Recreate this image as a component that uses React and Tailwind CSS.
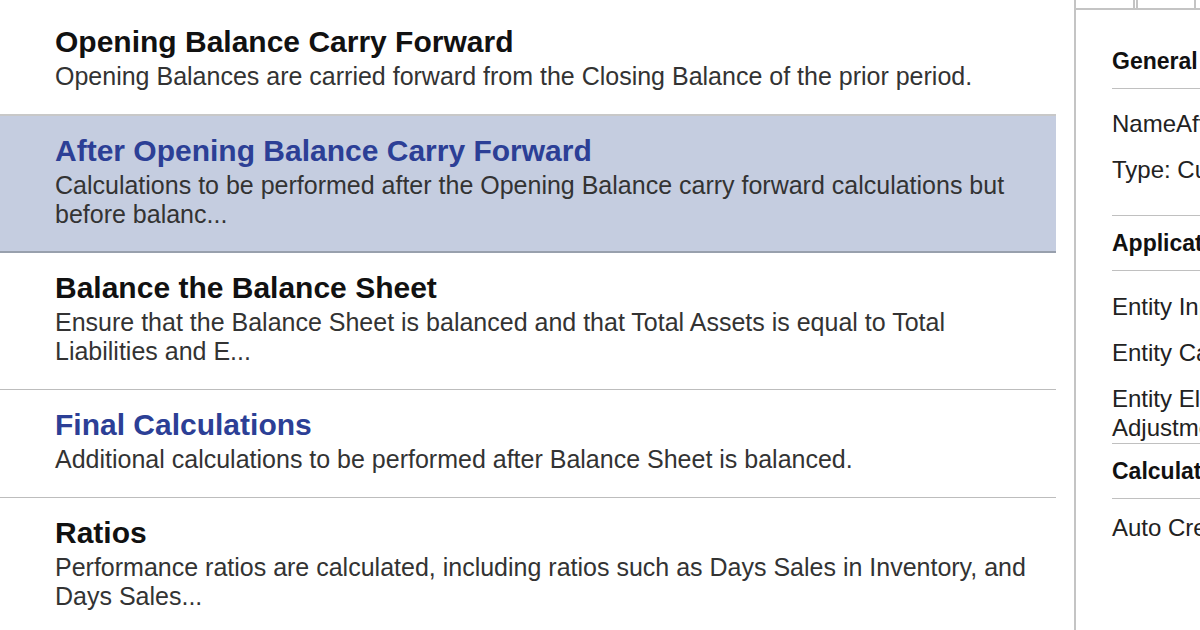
const rows = [
  {
    title: "Opening Balance Carry Forward",
    desc: "Opening Balances are carried forward from the Closing Balance of the prior period.",
  },
  {
    title: "After Opening Balance Carry Forward",
    desc: "Calculations to be performed after the Opening Balance carry forward calculations but before balanc...",
    selected: true,
  },
  {
    title: "Balance the Balance Sheet",
    desc: "Ensure that the Balance Sheet is balanced and that Total Assets is equal to Total Liabilities and E...",
  },
  {
    title: "Final Calculations",
    desc: "Additional calculations to be performed after Balance Sheet is balanced.",
    link: true,
  },
  {
    title: "Ratios",
    desc: "Performance ratios are calculated, including ratios such as Days Sales in Inventory, and Days Sales...",
  },
];

function Row({ row }) {
  const cls = row.selected
    ? "bg-[#c5cde0] border-t-2 border-t-[#c8c8c8] border-b-2 border-b-[#98a0ad] -mt-[1px] pb-[22px]"
    : "border-b border-[#bdbdbd] pb-[23px]";
  return (
    <div className={`pl-[55px] pr-[20px] pt-[18px] ${cls}`}>
      <div
        className={`text-[30px] leading-[34px] font-bold ${
          row.selected || row.link ? "text-[#2c3f96]" : "text-[#111]"
        }`}
      >
        {row.title}
      </div>
      <div className="mt-[3px] text-[25px] leading-[29px] text-[#333]">
        {row.desc}
      </div>
    </div>
  );
}

function Divider({ className }) {
  return <div className={`h-px bg-[#c0c0c0] ${className}`}></div>;
}

export default function App() {
  return (
    <div className="flex h-[630px] w-[1200px] overflow-hidden bg-white font-['Liberation_Sans',Arial,sans-serif]">
      <div className="w-[1056px] shrink-0 pt-[7px]">
        {rows.map((row, i) => (
          <Row key={i} row={row} />
        ))}
      </div>
      <div className="ml-[18px] min-w-0 flex-1 border-l-2 border-[#c4c4c4]">
        <div className="flex h-[10px] border-b-2 border-[#c4c4c4]">
          <div className="w-[59px] border-r-2 border-[#c4c4c4]"></div>
          <div className="ml-[1px] w-[60px] border-x-2 border-[#c4c4c4]"></div>
        </div>
        <div className="whitespace-nowrap pl-[36px] text-[24px] leading-[29px] text-[#222]">
          <div className="mt-[37px] text-[23px] leading-[28px] font-bold text-[#111]">
            General
          </div>
          <Divider className="mt-[13px] w-[400px]" />
          <div className="mt-[20px]">NameAfterOpeningBalanceCarryForward</div>
          <div className="mt-[17px]">Type: Custom</div>
          <Divider className="mt-[31px] w-[400px]" />
          <div className="mt-[13px] text-[23px] leading-[28px] font-bold text-[#111]">
            Application
          </div>
          <Divider className="mt-[13px] w-[400px]" />
          <div className="mt-[21px]">Entity Input</div>
          <div className="mt-[17px]">Entity Calculation</div>
          <div className="mt-[17px]">
            Entity Elimination
            <br />
            Adjustments
          </div>
          <Divider className="mt-[1px] w-[400px]" />
          <div className="mt-[13px] text-[23px] leading-[28px] font-bold text-[#111]">
            Calculation
          </div>
          <Divider className="mt-[13px] w-[400px]" />
          <div className="mt-[14px]">Auto Create Calculations</div>
        </div>
      </div>
    </div>
  );
}
